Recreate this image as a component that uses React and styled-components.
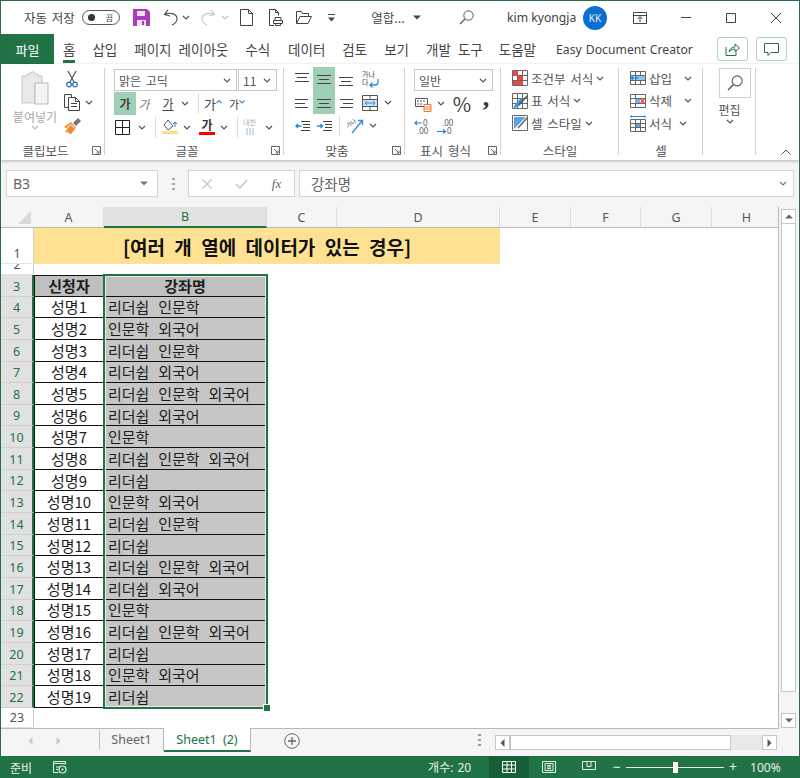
import React from 'react';
import styled, { createGlobalStyle } from 'styled-components';

const GREEN = '#217346';
const KR = '"Noto Sans CJK KR", "Noto Sans", sans-serif';
const LATIN = '"Noto Sans", "Noto Sans CJK KR", sans-serif';

const Global = createGlobalStyle`
    html, body{
        margin: 0;
        padding: 0;
        background: white;
    }
    *{
        box-sizing: border-box;
    }
`

const Win = styled.div`
    display: flex;
    flex-direction: column;
    width: 800px;
    height: 778px;
    overflow: hidden;
    border: 1px solid ${GREEN};
    border-bottom: none;
    background: #fff;
    color: #444;
    font-family: ${KR};
`

/* title bar */
const TitleBar = styled.div`
    display: flex;
    align-items: center;
    height: 33px;
    flex-shrink: 0;
    font-size: 12.5px;
`
const Q = styled.div`
    display: flex;
    align-items: center;
    justify-content: center;
    flex-shrink: 0;
    width: ${p => p.$w}px;
    margin-left: ${p => p.$ml || 0}px;
`
const AutoLabel = styled.span`
    margin-left: 23px;
    width: 58px;
    word-spacing: 2px;
    white-space: nowrap;
`
const Toggle = styled.div`
    display: flex;
    align-items: center;
    justify-content: space-between;
    width: 38px;
    height: 15px;
    padding: 0 6px 0 5px;
    border: 1px solid #555;
    border-radius: 8px;
    font-size: 8px;
    &::before{
        content: '';
        width: 7px;
        height: 7px;
        border-radius: 50%;
        background: #333;
    }
`
const UserName = styled.span`
    margin-left: 33px;
    width: 65px;
    flex-shrink: 0;
    font-family: ${LATIN};
    font-size: 12.2px;
    white-space: nowrap;
`
const Avatar = styled.div`
    display: flex;
    align-items: center;
    justify-content: center;
    flex-shrink: 0;
    width: 24px;
    height: 24px;
    margin-left: 11px;
    border-radius: 50%;
    background: #0a6fd0;
    color: #e8f2fb;
    font-family: ${LATIN};
    font-size: 10px;
`
const WinRight = styled.div`
    display: flex;
    align-items: center;
    margin-left: auto;
`

/* ribbon tabs */
const TabBar = styled.div`
    display: flex;
    align-items: stretch;
    height: 30px;
    flex-shrink: 0;
    font-size: 13.5px;
`
const FileTab = styled.div`
    display: flex;
    align-items: center;
    justify-content: center;
    width: 53px;
    background: ${GREEN};
    color: white;
    font-size: 13px;
`
const RibTab = styled.div`
    display: flex;
    align-items: center;
    margin-left: ${p => p.$ml}px;
    white-space: nowrap;
    font-family: ${p => p.$latin ? LATIN : KR};
    font-size: ${p => p.$latin ? 12.2 : 13.5}px;
    word-spacing: ${p => p.$latin ? 1 : 4}px;
    position: relative;
    ${p => p.$on && `
        &::after{
            content: '';
            position: absolute;
            left: 0;
            right: 0;
            bottom: 1px;
            height: 3px;
            background: ${GREEN};
        }
    `}
`
const TabBtn = styled.div`
    display: flex;
    align-items: center;
    justify-content: center;
    align-self: center;
    width: 31px;
    height: 24px;
    margin-left: ${p => p.$ml}px;
    border: 1px solid #a9d3bd;
    border-radius: 3px;
`

/* ribbon */
const Ribbon = styled.div`
    display: flex;
    height: 96px;
    flex-shrink: 0;
    box-shadow: 0 1px 3px rgba(0,0,0,.28);
    position: relative;
    z-index: 1;
    background: #fff;
`
const Group = styled.div`
    display: flex;
    flex-direction: column;
    flex-shrink: 0;
    width: ${p => p.$w}px;
    padding: 4px 0 4px ${p => p.$pl || 0}px;
    position: relative;
    &::after{
        content: '';
        position: absolute;
        right: 0;
        top: 4px;
        bottom: 5px;
        width: 1px;
        background: #d2d2d2;
    }
`
const GroupBody = styled.div`
    display: flex;
    flex-direction: ${p => p.$row ? 'row' : 'column'};
    height: ${p => 73 + (p.$mt || 0)}px;
    margin-top: ${p => p.$mt ? -p.$mt : 0}px;
    flex-shrink: 0;
`
const GroupFoot = styled.div`
    display: flex;
    align-items: center;
    height: 18px;
    margin-left: ${p => p.$pl ? -p.$pl : 0}px;
    color: #555;
    font-size: 12.5px;
    word-spacing: 2px;
    span{
        flex: 1;
        text-align: center;
    }
`
const Launcher = styled.svg`
    display: block;
    flex-shrink: 0;
    width: 9px;
    height: 9px;
    margin: 0 4px 0 2px;
`
const Row = styled.div`
    display: flex;
    align-items: center;
    height: ${p => p.$h || 23}px;
    flex-shrink: 0;
`
const Tool = styled.div`
    display: flex;
    align-items: center;
    justify-content: center;
    flex-shrink: 0;
    width: ${p => p.$w}px;
    height: 100%;
    margin-left: ${p => p.$ml || 0}px;
    background: ${p => p.$on ? '#9fcfb4' : 'transparent'};
    color: ${p => p.$c || '#444'};
    font-size: ${p => p.$fs || 12}px;
    font-weight: ${p => p.$b ? 700 : 400};
    font-style: ${p => p.$i ? 'italic' : 'normal'};
    text-decoration: ${p => p.$u ? 'underline' : 'none'};
`
const CommaMark = styled.span`
    margin-bottom: 11px;
    font-family: "Liberation Serif", serif;
    font-size: 26px;
    font-weight: 700;
    line-height: 1;
`
const Sep = styled.div`
    width: 1px;
    height: 21px;
    flex-shrink: 0;
    margin-left: ${p => p.$ml}px;
    background: #dcdcdc;
`
const Select = styled.div`
    display: flex;
    align-items: center;
    justify-content: space-between;
    width: ${p => p.$w}px;
    height: 22px;
    flex-shrink: 0;
    padding: 0 5px 0 4px;
    margin-right: ${p => p.$mr || 0}px;
    border: 1px solid #c8c8c8;
    background: #fff;
    font-size: 12px;
    color: #555;
    word-spacing: 2px;
`
const PasteCol = styled.div`
    display: flex;
    flex-direction: column;
    align-items: center;
    width: 58px;
    margin-left: 5px;
    padding-top: 3px;
    color: #aaa;
    font-size: 12px;
    svg:first-child{
        margin-bottom: 2px;
    }
`
const SmallCol = styled.div`
    display: flex;
    flex-direction: column;
    width: 38px;
    margin-left: -1px;
`
const StyleRow = styled.div`
    display: flex;
    align-items: center;
    height: 22.5px;
    flex-shrink: 0;
    gap: 3px;
    white-space: nowrap;
    font-size: 12.5px;
    word-spacing: 2px;
    color: #555;
`
const EditBtn = styled.div`
    display: flex;
    align-items: center;
    justify-content: center;
    width: 32px;
    height: 30px;
    margin-left: 10px;
    border: 1px solid #d0d0d0;
`
const EditCol = styled.div`
    display: flex;
    flex-direction: column;
    align-items: center;
    color: #555;
    font-size: 12px;
    margin-left: 1px;
    margin-right: 1px;
    span{
        margin-top: 3px;
        line-height: 18px;
    }
`
const Collapse = styled.div`
    flex: 1;
    display: flex;
    align-items: flex-end;
    justify-content: flex-end;
    padding: 0 8px 5px 0;
`

/* formula bar */
const FormulaBar = styled.div`
    display: flex;
    align-items: stretch;
    height: 47px;
    flex-shrink: 0;
    padding: 10px 5px 10px 5px;
    background: #f5f5f5;
`
const NameBox = styled.div`
    display: flex;
    align-items: center;
    justify-content: space-between;
    width: 152px;
    padding: 0 9px 0 6px;
    border: 1px solid #d4d4d4;
    background: #fff;
    color: #666;
    font-family: ${LATIN};
    font-size: 14px;
`
const Dots = styled.div`
    display: flex;
    align-items: center;
    justify-content: center;
    width: 30px;
`
const FxBox = styled.div`
    display: flex;
    align-items: center;
    width: 107px;
    border: 1px solid #d4d4d4;
    background: #fff;
`
const FxTool = styled.div`
    display: flex;
    justify-content: center;
    width: 35px;
    color: #666;
    font-family: "Liberation Serif", serif;
    font-style: italic;
    font-size: 13px;
`
const Formula = styled.div`
    flex: 1;
    display: flex;
    align-items: center;
    justify-content: space-between;
    margin-left: 4px;
    padding: 0 6px 0 11px;
    border: 1px solid #d4d4d4;
    background: #fff;
    color: #666;
    font-size: 14.5px;
`

/* sheet */
const SheetArea = styled.div`
    flex: 1;
    display: flex;
    min-height: 0;
    background: #f5f5f5;
`
const Grid = styled.div`
    display: grid;
    grid-template-columns: 33px 70px 163px 70px 163px 71px 70px 71px 70px;
    grid-template-rows: 21px 36px 11px repeat(20, 21.65px) 1fr;
    width: 778px;
    flex-shrink: 0;
    overflow: hidden;
    background: #fff;
    border-right: 1px solid #b9b9b9;
    border-bottom: 1px solid #b9b9b9;
`
const Corner = styled.div`
    grid-column: 1;
    grid-row: 1;
    background: #f5f5f5;
    border-bottom: 1px solid #b9b9b9;
    position: relative;
    &::after{
        content: '';
        position: absolute;
        right: 3px;
        bottom: 3px;
        border-style: solid;
        border-width: 0 0 13px 13px;
        border-color: transparent transparent #d9d9d9 transparent;
    }
`
const ColHead = styled.div`
    grid-row: 1;
    display: flex;
    align-items: center;
    justify-content: center;
    font-family: ${LATIN};
    font-size: 12.5px;
    background: ${p => p.$sel ? '#e1e1e1' : '#f5f5f5'};
    color: ${p => p.$sel ? GREEN : '#555'};
    border-bottom: ${p => p.$sel ? `2px solid ${GREEN}` : '1px solid #b9b9b9'};
    border-right: 1px solid #dcdcdc;
`
const RowHead = styled.div`
    grid-column: 1;
    grid-row: ${p => p.$row};
    display: flex;
    align-items: flex-end;
    justify-content: center;
    overflow: hidden;
    font-family: ${LATIN};
    font-size: 12.5px;
    line-height: 18px;
    background: ${p => p.$sel ? '#e1e1e1' : '#fff'};
    color: ${p => p.$sel ? GREEN : '#555'};
    border-right: ${p => p.$sel ? `2px solid ${GREEN}` : '1px solid #cfcfcf'};
    border-bottom: 1px solid ${p => p.$sel ? '#d0d0d0' : '#e2e2e2'};
`
const TitleCell = styled.div`
    grid-column: 2 / 6;
    grid-row: 2;
    display: flex;
    align-items: center;
    justify-content: center;
    background: #ffe194;
    color: #111;
    font-size: 19px;
    font-weight: 700;
    word-spacing: 5px;
`
const Cell = styled.div`
    grid-column: ${p => p.$col};
    grid-row: ${p => p.$row};
    display: flex;
    align-items: center;
    justify-content: ${p => p.$left ? 'flex-start' : 'center'};
    padding-left: ${p => p.$left ? 4 : 0}px;
    white-space: nowrap;
    overflow: hidden;
    font-size: 15px;
    word-spacing: 5.5px;
    color: #1d1d1d;
    font-weight: ${p => p.$head ? 700 : 400};
    background: ${p => p.$bg};
    border-bottom: 1px solid #111;
    border-left: ${p => p.$col === 2 ? '1px solid #111' : 'none'};
    border-right: 1px solid #111;
    border-top: ${p => p.$head ? '1px solid #111' : 'none'};
`
const Selection = styled.div`
    grid-column: 3;
    grid-row: 4 / 24;
    z-index: 2;
    position: relative;
    margin: -1px;
    border: 2px solid ${GREEN};
    box-shadow: inset 0 0 0 1px #e9e9e9;
    pointer-events: none;
`
const Handle = styled.div`
    position: absolute;
    right: -4px;
    bottom: -4px;
    width: 6px;
    height: 6px;
    background: ${GREEN};
    outline: 1px solid #fff;
`
const VScroll = styled.div`
    display: flex;
    flex-direction: column;
    width: 19px;
    padding: 2px 2px 1px 2px;
`
const ScrollBtn = styled.div`
    display: flex;
    align-items: center;
    justify-content: center;
    width: ${p => p.$w || '100%'};
    height: 15px;
    flex-shrink: 0;
    border: 1px solid #c6c6c6;
    background: #fff;
`
const VThumb = styled.div`
    height: 468px;
    flex-shrink: 0;
    border: 1px solid #c6c6c6;
    border-top: none;
    background: #fff;
`
const VTrack = styled.div`
    flex: 1;
`

/* sheet tabs */
const SheetTabs = styled.div`
    display: flex;
    align-items: flex-start;
    height: 27px;
    flex-shrink: 0;
    background: #f5f5f5;
    font-family: ${LATIN};
    font-size: 12.5px;
`
const TabNav = styled.div`
    display: flex;
    align-items: center;
    justify-content: center;
    width: 28px;
    height: 23px;
    margin-left: ${p => p.$ml || 0}px;
`
const NavSep = styled.div`
    width: 1px;
    height: 20px;
    margin: 1px 0 0 27px;
    background: #c0c0c0;
`
const SheetTab = styled.div`
    display: flex;
    align-items: center;
    justify-content: center;
    width: ${p => p.$w}px;
    height: ${p => p.$on ? 24 : 23}px;
    margin-top: -1px;
    color: ${p => p.$on ? GREEN : '#666'};
    background: ${p => p.$on ? '#fff' : 'transparent'};
    word-spacing: 3px;
    border-right: 1px solid #b9b9b9;
    border-bottom: ${p => p.$on ? `2px solid ${GREEN}` : 'none'};
`
const AddSheet = styled.div`
    display: flex;
    align-items: center;
    justify-content: center;
    width: 16px;
    height: 16px;
    margin: 4px 0 0 33px;
`
const HDots = styled.div`
    display: flex;
    align-items: center;
    justify-content: center;
    width: 12px;
    height: 22px;
    margin-left: 173px;
`
const HScroll = styled.div`
    display: flex;
    width: 282px;
    height: 15px;
    margin: 6px 0 0 10px;
    background: #e9e9e9;
`
const HThumb = styled.div`
    width: 221px;
    height: 15px;
    margin-right: auto;
    border: 1px solid #c6c6c6;
    background: #fff;
`

/* status bar */
const StatusBar = styled.div`
    display: flex;
    align-items: center;
    height: 22px;
    flex-shrink: 0;
    margin: 0 -1px;
    background: ${GREEN};
    color: #e6f0ea;
    font-size: 12px;
`
const Ready = styled.span`
    margin-left: 10px;
`
const Count = styled.span`
    margin-left: 361px;
    width: 44px;
    font-family: ${LATIN};
    word-spacing: 1px;
    white-space: nowrap;
`
const ViewBtn = styled.div`
    display: flex;
    align-items: center;
    justify-content: center;
    flex-shrink: 0;
    width: 40px;
    height: 22px;
    margin-left: ${p => p.$ml || 0}px;
    background: ${p => p.$on ? '#165f38' : 'transparent'};
`
const ZoomSlider = styled.div`
    width: 98px;
    height: 1px;
    flex-shrink: 0;
    margin: 0 5px;
    background: #dfeae4;
    position: relative;
    &::after{
        content: '';
        position: absolute;
        left: 47px;
        top: -5px;
        width: 5px;
        height: 11px;
        background: #fff;
    }
`
const ZoomSign = styled.span`
    width: 8px;
    flex-shrink: 0;
    margin-left: ${p => p.$ml || 0}px;
    text-align: center;
    font-family: ${LATIN};
    font-size: 14px;
    line-height: 1;
`
const ZoomPct = styled.span`
    margin-left: 13px;
    font-family: ${LATIN};
    white-space: nowrap;
`

/* drawn icons */
const Ic = ({ w = 16, h = 16, vb, children }) => (
    <svg width={w} height={h} viewBox={vb || `0 0 ${w} ${h}`} fill="none" style={{ display: 'block', flexShrink: 0 }}>{children}</svg>
)
const Chev = ({ c = '#555' }) => (
    <Ic w={8} h={5}><path d="M1 1l3 3 3-3" stroke={c} strokeWidth="1.2" /></Ic>
)

const SaveIcon = () => (
    <Ic w={17} h={17}>
        <path d="M0 0h14l3 3v14H0z" fill="#a83fb8" />
        <path d="M4 2h8v5H4zM4 11h9v6H4z" fill="#f3dff6" />
        <path d="M9 12h2v4H9z" fill="#a83fb8" />
    </Ic>
)
const UndoIcon = () => (
    <Ic w={16} h={17}><path d="M5 1L1.500 5.500 7 7M2 5.500c5-2.500 11-1 12 3.500 .6 3-2 6-5 7" stroke="#444" strokeWidth="1.100" /></Ic>
)
const RedoIcon = () => (
    <Ic w={16} h={17}><path d="M11 1l3.500 4.500L9 7M14 5.500C9 3 3 4.500 2 9c-.6 3 2 6 5 7" stroke="#c4c4c4" strokeWidth="1.100" /></Ic>
)
const DocIcon = () => (
    <Ic w={13} h={17}><path d="M.5.500h8l4 4v12H.5zM8.500.500v4h4" stroke="#444" /></Ic>
)
const PrintIcon = () => (
    <Ic w={15} h={17}><path d="M.5.500h6l3 3v3M6.500.500v3h3M5 16.500H.5V.500" stroke="#444" /><path d="M6 8.500h6v3H6zM4.500 11.500h9v3h-9zM6.500 14.500h5v2h-5z" stroke="#444" /></Ic>
)
const FolderIcon = () => (
    <Ic w={16} h={13}><path d="M.5 12.500V.5h5l1 2h6v3M.5 12.500h11.500l3.500-7H4z" stroke="#444" /></Ic>
)
const Qat = () => (
    <Ic w={9} h={8}><path d="M1 .5h7" stroke="#444" /><path d="M1 3.500h7L4.500 7.500z" fill="#444" /></Ic>
)
const SearchIcon = ({ s = 15 }) => (
    <Ic w={s} h={s} vb="0 0 15 15"><circle cx="9.500" cy="5.500" r="4.700" stroke="#555" /><path d="M6 9L1 14" stroke="#555" strokeWidth="1.300" /></Ic>
)
const DisplayIcon = () => (
    <Ic w={14} h={12}><path d="M.5.500h13v11H.5zM.5 3.500h13" stroke="#444" /><path d="M7 10V5M4.500 7L7 4.500 9.500 7" stroke="#444" /></Ic>
)
const ShareIcon = () => (
    <Ic w={15} h={14}><path d="M1 5v8.500h10V9" stroke={GREEN} /><path d="M4 10c.5-3 3-5 6-5V2l4.500 4L10 9.500V7C7.500 7 5.500 8 4 10z" stroke={GREEN} /></Ic>
)
const CommentIcon = () => (
    <Ic w={15} h={13}><path d="M.5.500h14v9H7l-3 3v-3H.5z" stroke={GREEN} /></Ic>
)
const PasteIcon = () => (
    <Ic w={28} h={35}>
        <path d="M1 5h5V3h3l1-2h3l1 2h3v2h4v7h-7v20H1z" fill="#e9e9e9" stroke="#c8c8c8" />
        <path d="M14 12h13v21H14z" fill="#f4f4f4" stroke="#b9b9b9" />
    </Ic>
)
const CutIcon = () => (
    <Ic w={12} h={18}>
        <path d="M2 1l6 11M10 1L4 12" stroke="#555" strokeWidth="1.200" />
        <circle cx="3" cy="14.500" r="2.300" stroke="#2e75b6" strokeWidth="1.300" />
        <circle cx="9" cy="14.500" r="2.300" stroke="#2e75b6" strokeWidth="1.300" />
    </Ic>
)
const CopyIcon = () => (
    <Ic w={17} h={17}>
        <path d="M5 13.500H.5V.5h7v3" stroke="#444" />
        <path d="M4.500 3.500h7l4 4v9h-11zM11.500 3.500v4h4M7 9.500h6M7 12.500h6" stroke="#444" />
    </Ic>
)
const BrushIcon = () => (
    <Ic w={17} h={16}>
        <path d="M0 9l7-5 5 6-5 6c-2 0-3-1-2.500-2.500C3 15 2 15 1.500 13L4 11z" fill="#ed8b2e" />
        <path d="M3 9.500l4-3 3.500 4" stroke="#fff" />
        <path d="M9 5l5-5 3 3-5 5z" fill="#777" />
    </Ic>
)
const BordersIcon = () => (
    <Ic w={15} h={15}><path d="M.5.500h14v14H.5zM7.500.5v14M.5 7.500h14" stroke="#222" /></Ic>
)
const FillIcon = () => (
    <Ic w={17} h={16}>
        <path d="M6 1l5 6-5 4-4-5z" stroke="#555" />
        <path d="M13 3v5M11 5l2-2 2 2" stroke="#2e75b6" />
        <path d="M0 12h16v3H0z" fill="#ffe08f" />
    </Ic>
)
const FontColorMark = styled.div`
    display: flex;
    flex-direction: column;
    align-items: center;
    font-size: 12px;
    font-weight: 700;
    line-height: 12px;
    color: #333;
    &::after{
        content: '';
        width: 16px;
        height: 3px;
        background: #f00;
        margin-top: 1px;
    }
`
const RubyIcon = () => (
    <Ic w={16} h={18}>
        <text x="1" y="7" fontSize="7" fill="#aaa" fontFamily={KR}>내천</text>
        <path d="M5 10v7M8 10v7M11 10v7" stroke="#8dbce4" />
    </Ic>
)
const SizeCaret = ({ up }) => (
    <Ic w={6} h={9}><path d={up ? 'M.5 4L3 1.500 5.500 4' : 'M.5 1.500L3 4l2.500-2.500'} stroke="#3a94dc" strokeWidth="1.200" /></Ic>
)
const Lines = ({ kind, y = 0 }) => {
    const w = kind === 'left' ? [0, 12, 0, 9] : kind === 'right' ? [1, 13, 4, 13] : [0, 13, 2, 11]
    const rows = [3 + y, 7 + y, 11 + y]
    return (
        <Ic w={14} h={16}>
            <path d={`M${w[0]} ${rows[0] + .5}H${w[1] + 1}M${w[2]} ${rows[1] + .5}H${w[3] + 1}M${w[0]} ${rows[2] + .5}H${w[1] + 1}`} stroke="#444" />
        </Ic>
    )
}
const WrapIcon = () => (
    <Ic w={18} h={18}>
        <text x="0" y="7" fontSize="7" fill="#444" fontFamily={KR}>가나</text>
        <text x="0" y="15" fontSize="7" fill="#444" fontFamily={KR}>다</text>
        <path d="M16 9v3c0 2-1 3-3 3H8M10.500 12.500L8 15l2.500 2.500" stroke="#2e8bdc" strokeWidth="1.300" />
    </Ic>
)
const MergeIcon = () => (
    <Ic w={16} h={16}>
        <path d="M1 5h14v6H1z" fill="#cfe3f6" />
        <path d="M.5.5h15v15H.5zM.5 4.500h15M.5 11.500h15M8 .5v4M8 11.500v4" stroke="#555" />
        <path d="M3 8h10M5 6L3 8l2 2M11 6l2 2-2 2" stroke="#2e8bdc" />
    </Ic>
)
const IndentIcon = ({ flip }) => (
    <Ic w={15} h={12}>
        <path d="M6 1.500h9M8 4.500h7M8 7.500h7M6 10.500h9" stroke="#444" />
        <path d={flip ? 'M0 6h5M3.500 4L5.500 6l-2 2' : 'M1 6h5.500M3 4L1 6l2 2'} stroke="#1e88e5" strokeWidth="1.300" />
    </Ic>
)
const OrientIcon = () => (
    <Ic w={17} h={16}>
        <text x="0" y="8" fontSize="6" fill="#444" transform="rotate(-35 4 8)" fontFamily={KR}>가나</text>
        <path d="M5 15L15 3M11 2.500h4.500V7" stroke="#2e8bdc" strokeWidth="1.300" />
    </Ic>
)
const AcctIcon = () => (
    <Ic w={17} h={16}>
        <path d="M.5 2.500h12v8H.5z" stroke="#555" />
        <path d="M2 5h9M2 8h5" stroke="#555" strokeDasharray="2 1" />
        <path d="M9 8.500h7v7H9z" fill="#fff" stroke="#ed7d31" />
        <path d="M9 11h7M9 13h7" stroke="#ed7d31" />
    </Ic>
)
const DecIcon = ({ inc }) => (
    <Ic w={18} h={16}>
        <text x={inc ? 5 : 9} y="7" fontSize="8" fill="#555" fontFamily={LATIN}>{inc ? '.00' : '0'}</text>
        <text x={inc ? 10 : 3} y="15" fontSize="8" fill="#555" fontFamily={LATIN}>{inc ? '0' : '.00'}</text>
        <path d={inc ? 'M0 12.500h8M6 10.500l2.500 2-2.500 2' : 'M1 4h7M3 2L1 4l2 2'} stroke="#1e88e5" strokeWidth="1.200" />
    </Ic>
)
const CondIcon = () => (
    <Ic w={16} h={16}>
        <path d="M.5.5h15v15H.5zM5.500.5v15M10.500.5v15M.5 5.500h15M.5 10.500h15" stroke="#666" />
        <path d="M1 1h5v5H1zM1 11h10v4H1zM6 6h5v4H6z" fill="#e8484a" />
    </Ic>
)
const TableIcon = () => (
    <Ic w={16} h={16}>
        <path d="M.5.5h15v15H.5zM5.500.5v15M10.500.5v15M.5 5.500h15M.5 10.500h15" stroke="#666" />
        <path d="M1 15l3-5 5-5 3 2-6 7z" fill="#3a94dc" />
        <path d="M7 12L15 3" stroke="#555" strokeWidth="1.500" />
    </Ic>
)
const CellStyleIcon = () => (
    <Ic w={16} h={16}>
        <path d="M.5.5h15v15H.5z" stroke="#666" />
        <path d="M2 2h12L2 14z" fill="#5ba3e0" />
        <path d="M6 13l9-10" stroke="#666" strokeWidth="1.500" />
    </Ic>
)
const InsertIcon = () => (
    <Ic w={16} h={14}>
        <path d="M.5.500h15v13H.5zM5.500.5v13M10.500.5v13M.5 4.500h15M.5 9.500h15" stroke="#666" />
        <path d="M6 5h9v4H6z" fill="#8cc2ef" />
        <path d="M1 7h7M3.500 4.500L1 7l2.500 2.500" stroke="#1e88e5" strokeWidth="1.300" />
    </Ic>
)
const DeleteIcon = () => (
    <Ic w={16} h={14}>
        <path d="M.5.500h15v13H.5zM.5 4.500h15M.5 9.500h15M5.500.5v13" stroke="#666" />
        <path d="M5 5h5v4H5z" fill="#6fb1ea" />
        <path d="M10.500 4.500l4 5M14.500 4.500l-4 5" stroke="#e8484a" strokeWidth="1.300" />
    </Ic>
)
const FormatIcon = () => (
    <Ic w={16} h={17}>
        <path d="M1 1.500h14M1 0v3M15 0v3" stroke="#1e88e5" />
        <path d="M.5 4.500h15v12H.5zM5.500 4.500v12M10.500 4.500v12M.5 8.500h15M.5 12.500h15" stroke="#666" />
        <path d="M6 9h4v3H6z" fill="#5ba3e0" />
    </Ic>
)
const Grip = ({ c = '#999' }) => (
    <Ic w={3} h={14}><path d="M0 1h3v2H0zM0 6h3v2H0zM0 11h3v2H0z" fill={c} /></Ic>
)
const Tri = ({ dir, c = '#666' }) => {
    const d = { up: 'M0 4.500h8L4 .5z', down: 'M0 .5h8L4 4.500z', left: 'M4.500 0v8L.5 4z', right: 'M.5 0v8l4-4z' }[dir]
    const flat = dir === 'up' || dir === 'down'
    return <Ic w={flat ? 8 : 5} h={flat ? 5 : 8}><path d={d} fill={c} /></Ic>
}

const names = [
    '리더쉽 인문학', '인문학 외국어', '리더쉽 인문학', '리더쉽 외국어', '리더쉽 인문학 외국어',
    '리더쉽 외국어', '인문학', '리더쉽 인문학 외국어', '리더쉽', '인문학 외국어',
    '리더쉽 인문학', '리더쉽', '리더쉽 인문학 외국어', '리더쉽 외국어', '인문학',
    '리더쉽 인문학 외국어', '리더쉽', '인문학 외국어', '리더쉽',
]

const LauncherIcon = () => (
    <Launcher viewBox="0 0 9 9" fill="none"><path d="M.5 8.500V.5h8v8zM3 3l4 4M7 4.500V7H4.500" stroke="#666" /></Launcher>
)

const RibbonTabs = [
    ['삽입', 17], ['페이지 레이아웃', 17], ['수식', 17], ['데이터', 18], ['검토', 17],
    ['보기', 17], ['개발 도구', 17], ['도움말', 16],
]

const ColumnHeads = ['A', 'B', 'C', 'D', 'E', 'F', 'G', 'H']

const App = () => {
    return (
        <Win>
            <Global />
            <TitleBar>
                <AutoLabel>자동 저장</AutoLabel>
                <Toggle>끔</Toggle>
                <Q $w={17} $ml={13}><SaveIcon /></Q>
                <Q $w={16} $ml={13}><UndoIcon /></Q>
                <Q $w={8} $ml={3}><Chev /></Q>
                <Q $w={16} $ml={10}><RedoIcon /></Q>
                <Q $w={8} $ml={5}><Chev c="#c4c4c4" /></Q>
                <Q $w={13} $ml={11}><DocIcon /></Q>
                <Q $w={15} $ml={16}><PrintIcon /></Q>
                <Q $w={16} $ml={12}><FolderIcon /></Q>
                <Q $w={9} $ml={15}><Qat /></Q>
                <Q $w={36} $ml={34}>열합...</Q>
                <Q $w={8} $ml={7}><Tri dir="down" c="#444" /></Q>
                <Q $w={15} $ml={38}><SearchIcon /></Q>
                <UserName>kim kyongja</UserName>
                <Avatar>KK</Avatar>
                <WinRight>
                    <Q $w={14}><DisplayIcon /></Q>
                    <Q $w={10} $ml={34}><Ic w={10} h={2}><path d="M0 .5h10" stroke="#444" /></Ic></Q>
                    <Q $w={10} $ml={35}><Ic w={10} h={10}><path d="M.5.5h9v9h-9z" stroke="#444" /></Ic></Q>
                    <Q $w={10} $ml={35}><Ic w={10} h={10}><path d="M0 0l10 10M10 0L0 10" stroke="#444" /></Ic></Q>
                    <Q $w={18} />
                </WinRight>
            </TitleBar>

            <TabBar>
                <FileTab>파일</FileTab>
                <RibTab $ml={9} $on>홈</RibTab>
                {RibbonTabs.map(([t, ml]) => <RibTab key={t} $ml={ml}>{t}</RibTab>)}
                <RibTab $ml={20} $latin>Easy Document Creator</RibTab>
                <TabBtn $ml={24}><ShareIcon /></TabBtn>
                <TabBtn $ml={8}><CommentIcon /></TabBtn>
            </TabBar>

            <Ribbon>
                <Group $w={104}>
                    <GroupBody $row>
                        <PasteCol>
                            <PasteIcon />
                            <span>붙여넣기</span>
                            <Chev c="#bbb" />
                        </PasteCol>
                        <SmallCol>
                            <Row $h={22}><Tool $w={18}><CutIcon /></Tool></Row>
                            <Row $h={24}><Tool $w={18}><CopyIcon /></Tool><Tool $w={12} $ml={2}><Chev /></Tool></Row>
                            <Row $h={23}><Tool $w={18}><BrushIcon /></Tool></Row>
                        </SmallCol>
                    </GroupBody>
                    <GroupFoot><span>클립보드</span><LauncherIcon /></GroupFoot>
                </Group>

                <Group $w={179} $pl={9}>
                    <GroupBody>
                        <Row $h={24}>
                            <Select $w={123} $mr={1}>맑은 고딕<Chev /></Select>
                            <Select $w={39}>11<Chev /></Select>
                        </Row>
                        <Row $h={23}>
                            <Tool $w={22} $on $b>가</Tool>
                            <Tool $w={16} $i $c="#777">가</Tool>
                            <Tool $w={20} $ml={6} $u>가</Tool>
                            <Tool $w={14}><Chev /></Tool>
                            <Sep $ml={6} />
                            <Tool $w={18} $ml={5} $fs={13}>가<SizeCaret up /></Tool>
                            <Tool $w={16} $ml={7} $fs={11}>가<SizeCaret /></Tool>
                        </Row>
                        <Row $h={24}>
                            <Tool $w={16}><BordersIcon /></Tool>
                            <Tool $w={12} $ml={6}><Chev /></Tool>
                            <Sep $ml={7} />
                            <Tool $w={18} $ml={5}><FillIcon /></Tool>
                            <Tool $w={12} $ml={2}><Chev /></Tool>
                            <Tool $w={18} $ml={5}><FontColorMark>가</FontColorMark></Tool>
                            <Tool $w={12} $ml={2}><Chev /></Tool>
                            <Sep $ml={7} />
                            <Tool $w={18} $ml={3}><RubyIcon /></Tool>
                            <Tool $w={12} $ml={4}><Chev /></Tool>
                        </Row>
                    </GroupBody>
                    <GroupFoot $pl={9}><span>글꼴</span><LauncherIcon /></GroupFoot>
                </Group>

                <Group $w={121} $pl={7}>
                    <GroupBody $mt={1}>
                        <Row $h={24}>
                            <Tool $w={22}><Lines kind="center" y={-1} /></Tool>
                            <Tool $w={22} $on><Lines kind="center" y={1} /></Tool>
                            <Tool $w={22}><Lines kind="center" y={3} /></Tool>
                            <Tool $w={28}><WrapIcon /></Tool>
                        </Row>
                        <Row $h={23}>
                            <Tool $w={22}><Lines kind="left" y={1} /></Tool>
                            <Tool $w={22} $on><Lines kind="center" y={1} /></Tool>
                            <Tool $w={22}><Lines kind="right" y={1} /></Tool>
                            <Tool $w={26}><MergeIcon /></Tool>
                            <Tool $w={10}><Chev /></Tool>
                        </Row>
                        <Row $h={23}>
                            <Tool $w={22}><IndentIcon /></Tool>
                            <Tool $w={22}><IndentIcon flip /></Tool>
                            <Sep $ml={4} />
                            <Tool $w={26} $ml={2}><OrientIcon /></Tool>
                            <Tool $w={10}><Chev /></Tool>
                        </Row>
                    </GroupBody>
                    <GroupFoot $pl={7}><span>맞춤</span><LauncherIcon /></GroupFoot>
                </Group>

                <Group $w={96} $pl={9}>
                    <GroupBody>
                        <Row $h={24}><Select $w={79}>일반<Chev /></Select></Row>
                        <Row $h={23}>
                            <Tool $w={18}><AcctIcon /></Tool>
                            <Tool $w={12} $ml={3}><Chev /></Tool>
                            <Tool $w={22} $ml={4} $fs={20}>%</Tool>
                            <Tool $w={16} $ml={5} $c="#333"><CommaMark>,</CommaMark></Tool>
                        </Row>
                        <Row $h={23}>
                            <Tool $w={18}><DecIcon /></Tool>
                            <Tool $w={18} $ml={5}><DecIcon inc /></Tool>
                        </Row>
                    </GroupBody>
                    <GroupFoot $pl={9}><span>표시 형식</span><LauncherIcon /></GroupFoot>
                </Group>

                <Group $w={118} $pl={11}>
                    <GroupBody $mt={1}>
                        <StyleRow><CondIcon />조건부 서식 <Chev /></StyleRow>
                        <StyleRow><TableIcon />표 서식 <Chev /></StyleRow>
                        <StyleRow><CellStyleIcon />셀 스타일 <Chev /></StyleRow>
                    </GroupBody>
                    <GroupFoot $pl={11}><span>스타일</span></GroupFoot>
                </Group>

                <Group $w={84} $pl={11}>
                    <GroupBody $mt={1}>
                        <StyleRow><InsertIcon />삽입<Tool $w={8} $ml={9}><Chev /></Tool></StyleRow>
                        <StyleRow><DeleteIcon />삭제<Tool $w={8} $ml={9}><Chev /></Tool></StyleRow>
                        <StyleRow><FormatIcon />서식<Tool $w={8} $ml={4}><Chev /></Tool></StyleRow>
                    </GroupBody>
                    <GroupFoot $pl={11}><span>셀</span></GroupFoot>
                </Group>

                <Group $w={53}>
                    <GroupBody>
                        <EditCol>
                            <EditBtn><SearchIcon s={16} /></EditBtn>
                            <span>편집</span>
                            <Chev />
                        </EditCol>
                    </GroupBody>
                </Group>

                <Collapse><Ic w={10} h={6}><path d="M.5 5.500L5 1l4.500 4.500" stroke="#555" /></Ic></Collapse>
            </Ribbon>

            <FormulaBar>
                <NameBox>B3<Tri dir="down" c="#777" /></NameBox>
                <Dots><Grip c="#aaa" /></Dots>
                <FxBox>
                    <FxTool><Ic w={10} h={10}><path d="M.5.5l9 9M9.500.5l-9 9" stroke="#c4c4c4" strokeWidth="1.300" /></Ic></FxTool>
                    <FxTool><Ic w={13} h={10}><path d="M1 5l4 4 7-8" stroke="#c4c4c4" strokeWidth="1.500" /></Ic></FxTool>
                    <FxTool>fx</FxTool>
                </FxBox>
                <Formula>강좌명<Chev c="#777" /></Formula>
            </FormulaBar>

            <SheetArea>
                <Grid>
                    <Corner />
                    {ColumnHeads.map(c => <ColHead key={c} $sel={c === 'B'}>{c}</ColHead>)}

                    <RowHead $row={2}>1</RowHead>
                    <TitleCell>[여러 개 열에 데이터가 있는 경우]</TitleCell>
                    <RowHead $row={3}>2</RowHead>

                    <RowHead $row={4} $sel>3</RowHead>
                    <Cell $col={2} $row={4} $head $bg="#bfbfbf">신청자</Cell>
                    <Cell $col={3} $row={4} $head $bg="#bfbfbf">강좌명</Cell>

                    {names.map((name, i) => (
                        <React.Fragment key={i}>
                            <RowHead $row={i + 5} $sel>{i + 4}</RowHead>
                            <Cell $col={2} $row={i + 5} $bg="#fff">성명{i + 1}</Cell>
                            <Cell $col={3} $row={i + 5} $left $bg="#c6c6c6">{name}</Cell>
                        </React.Fragment>
                    ))}

                    <RowHead $row={24}>23</RowHead>
                    <Selection><Handle /></Selection>
                </Grid>
                <VScroll>
                    <ScrollBtn><Tri dir="up" /></ScrollBtn>
                    <VThumb />
                    <VTrack />
                    <ScrollBtn><Tri dir="down" /></ScrollBtn>
                </VScroll>
            </SheetArea>

            <SheetTabs>
                <TabNav $ml={15}><Tri dir="left" c="#c8c8c8" /></TabNav>
                <TabNav><Tri dir="right" c="#c8c8c8" /></TabNav>
                <NavSep />
                <SheetTab $w={64}>Sheet1</SheetTab>
                <SheetTab $w={87} $on>Sheet1 (2)</SheetTab>
                <AddSheet>
                    <Ic w={16} h={16}>
                        <circle cx="8" cy="8" r="7.300" stroke="#666" />
                        <path d="M8 4v8M4 8h8" stroke="#666" strokeWidth="1.300" />
                    </Ic>
                </AddSheet>
                <HDots><Grip /></HDots>
                <HScroll>
                    <ScrollBtn $w="15px"><Tri dir="left" c="#555" /></ScrollBtn>
                    <HThumb />
                    <ScrollBtn $w="15px"><Tri dir="right" c="#555" /></ScrollBtn>
                </HScroll>
            </SheetTabs>

            <StatusBar>
                <Ready>준비</Ready>
                <Q $w={14} $ml={21}>
                    <Ic w={14} h={13}>
                        <path d="M.5 2.500h12M.5.5h12v3M.5.5v11h5M3 6h3M3 8.500h2" stroke="#e6f0ea" />
                        <circle cx="9.500" cy="8.500" r="3.500" stroke="#e6f0ea" strokeWidth="1.200" />
                        <circle cx="9.500" cy="8.500" r="1" fill="#e6f0ea" />
                    </Ic>
                </Q>
                <Count>개수: 20</Count>
                <ViewBtn $ml={17} $on>
                    <Ic w={14} h={12}><path d="M.5.5h13v11H.5zM5 .5v11M9.500.5v11M.5 4h13M.5 8h13" stroke="#fff" /></Ic>
                </ViewBtn>
                <ViewBtn>
                    <Ic w={14} h={12}><path d="M.5.5h13v11H.5zM3 2.500h8v7H3zM5 4.500h4M5 6h4M5 7.500h4" stroke="#e6f0ea" /></Ic>
                </ViewBtn>
                <ViewBtn>
                    <Ic w={14} h={12}><path d="M.5.5h13v8H.5V.5zM5 .5v5h4v-5" stroke="#e6f0ea" /></Ic>
                </ViewBtn>
                <ZoomSign $ml={4}>−</ZoomSign>
                <ZoomSlider />
                <ZoomSign>+</ZoomSign>
                <ZoomPct>100%</ZoomPct>
            </StatusBar>
        </Win>
    )
}

export default App;
